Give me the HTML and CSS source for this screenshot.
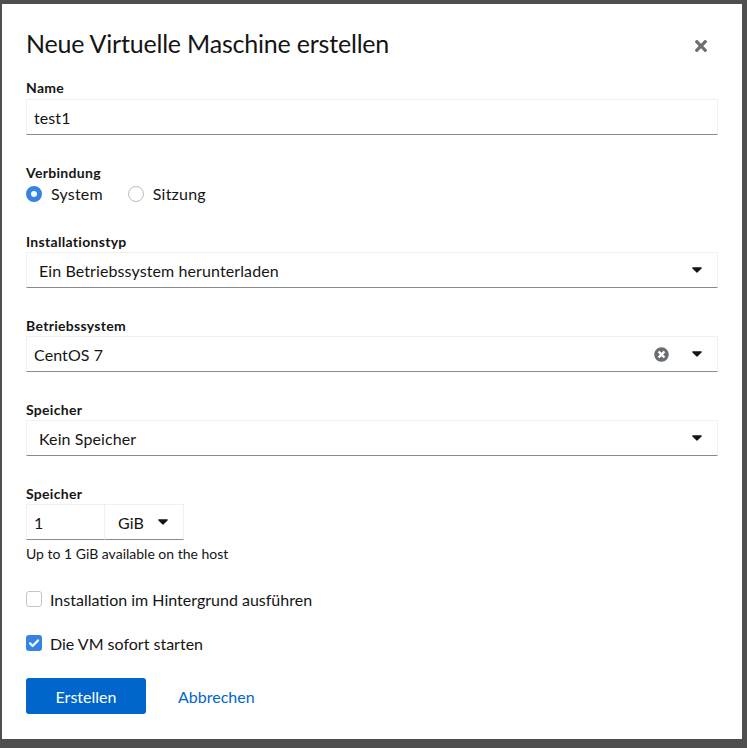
FILE: index.html
```html
<!DOCTYPE html>
<html lang="de">
<head>
<meta charset="utf-8">
<title>Neue Virtuelle Maschine erstellen</title>
<link rel="stylesheet" href="styles.css">
</head>
<body>
<div class="modal">
  <header class="modal-header">
    <h1 class="modal-title">Neue Virtuelle Maschine erstellen</h1>
    <button class="close-btn" aria-label="Schließen">
      <svg viewBox="0 89 352 334" width="12" height="12"><path fill="currentColor" d="M242.72 256l100.07-100.07c12.28-12.28 12.28-32.19 0-44.48l-22.24-22.24c-12.28-12.28-32.19-12.28-44.48 0L176 189.28 75.930 89.21c-12.28-12.28-32.19-12.28-44.48 0L9.21 111.45c-12.28 12.28-12.28 32.19 0 44.48L109.28 256 9.21 356.07c-12.28 12.28-12.28 32.19 0 44.48l22.24 22.24c12.28 12.28 32.2 12.28 44.48 0L176 322.72l100.07 100.07c12.28 12.28 32.2 12.28 44.48 0l22.24-22.24c12.28-12.28 12.28-32.19 0-44.48L242.72 256z"/></svg>
    </button>
  </header>

  <form class="form">
    <div class="group">
      <label class="label">Name</label>
      <div class="input"><span class="input-text">test1</span></div>
    </div>

    <div class="group">
      <label class="label">Verbindung</label>
      <div class="radios">
        <span class="radio-item"><span class="radio checked"></span>System</span>
        <span class="radio-item"><span class="radio"></span>Sitzung</span>
      </div>
    </div>

    <div class="group">
      <label class="label">Installationstyp</label>
      <div class="input select">
        <span class="select-text">Ein Betriebssystem herunterladen</span>
        <svg class="caret" viewBox="4 192 312 168" width="10" height="6"><path fill="currentColor" d="M31.3 192h257.3c17.8 0 26.7 21.5 14.1 34.1L174.1 354.8c-7.8 7.8-20.5 7.8-28.3 0L17.2 226.1C4.6 213.5 13.5 192 31.3 192z"/></svg>
      </div>
    </div>

    <div class="group">
      <label class="label">Betriebssystem</label>
      <div class="input select">
        <span class="input-text">CentOS 7</span>
        <svg class="clear" viewBox="0 0 512 512" width="15" height="15"><path fill="currentColor" d="M256 8C119 8 8 119 8 256s111 248 248 248 248-111 248-248S393 8 256 8zm121.6 313.1c4.7 4.7 4.7 12.3 0 17L338 377.6c-4.7 4.7-12.3 4.7-17 0L256 312l-65.1 65.6c-4.7 4.7-12.3 4.7-17 0L134.4 338c-4.7-4.700-4.7-12.3 0-17l65.6-65-65.6-65.1c-4.7-4.7-4.7-12.3 0-17l39.6-39.6c4.7-4.7 12.3-4.7 17 0l65 65.7 65.1-65.6c4.7-4.7 12.3-4.7 17 0l39.6 39.6c4.7 4.7 4.7 12.3 0 17L312 256l65.6 65.1z"/></svg>
        <svg class="caret" viewBox="4 192 312 168" width="10" height="6"><path fill="currentColor" d="M31.3 192h257.3c17.8 0 26.7 21.5 14.1 34.1L174.1 354.8c-7.8 7.8-20.5 7.8-28.3 0L17.2 226.1C4.6 213.5 13.5 192 31.3 192z"/></svg>
      </div>
    </div>

    <div class="group">
      <label class="label">Speicher</label>
      <div class="input select">
        <span class="select-text">Kein Speicher</span>
        <svg class="caret" viewBox="4 192 312 168" width="10" height="6"><path fill="currentColor" d="M31.3 192h257.3c17.8 0 26.7 21.5 14.1 34.1L174.1 354.8c-7.8 7.8-20.5 7.8-28.3 0L17.2 226.1C4.6 213.5 13.5 192 31.3 192z"/></svg>
      </div>
    </div>

    <div class="group">
      <label class="label">Speicher</label>
      <div class="input-group">
        <div class="input small"><span class="input-text">1</span></div>
        <div class="input small unit">
          <span class="unit-text">GiB</span>
          <svg class="caret" viewBox="4 192 312 168" width="10" height="6"><path fill="currentColor" d="M31.3 192h257.3c17.8 0 26.7 21.5 14.1 34.1L174.1 354.8c-7.8 7.8-20.5 7.8-28.3 0L17.2 226.1C4.6 213.5 13.5 192 31.3 192z"/></svg>
        </div>
      </div>
      <div class="helper">Up to 1 GiB available on the host</div>
    </div>

    <div class="check-row first">
      <span class="checkbox"></span>Installation im Hintergrund ausführen
    </div>
    <div class="check-row second">
      <span class="checkbox checked">
        <svg viewBox="0 0 16 16" width="16" height="16"><path d="M4 8.3l2.6 2.6L12 5.4" fill="none" stroke="#fff" stroke-width="2.2" stroke-linecap="round" stroke-linejoin="round"/></svg>
      </span>Die VM sofort starten
    </div>

    <div class="actions">
      <button type="button" class="btn-primary">Erstellen</button>
      <button type="button" class="btn-link">Abbrechen</button>
    </div>
  </form>
</div>
</body>
</html>
```

FILE: styles.css
```css
html, body {
  margin: 0;
  padding: 0;
  background: #4f4f4f;
}

body {
  font-family: "Lato", "Liberation Sans", sans-serif;
  color: #151515;
  padding: 4px 5px 9px 2px;
}

.modal {
  width: 740px;
  height: 735px;
  box-sizing: border-box;
  background: #fff;
  padding: 24px 24px 24px 24px;
  display: flex;
  flex-direction: column;
}

.modal-header {
  display: flex;
  align-items: flex-start;
  justify-content: space-between;
  height: 36px;
}

.modal-title {
  margin: 0;
  font-size: 25px;
  font-weight: 400;
  line-height: 30px;
  letter-spacing: -0.2px;
}

.close-btn {
  border: 0;
  background: none;
  padding: 0;
  margin-right: 11px;
  color: #6a6e73;
  display: flex;
  align-items: center;
  margin-top: 12px;
}

.form {
  display: flex;
  flex-direction: column;
  margin-top: 14px;
}

.group {
  display: flex;
  flex-direction: column;
  margin-bottom: 28px;
}

.label {
  font-size: 14px;
  font-weight: 700;
  line-height: 20px;
  height: 20px;
  letter-spacing: 0.3px;
}

.group:first-child .label {
  height: 21px;
}

.input {
  height: 36px;
  box-sizing: border-box;
  border: 1px solid #f0f0f0;
  border-bottom-color: #8a8d90;
  display: flex;
  align-items: center;
  font-size: 16px;
  letter-spacing: 0.1px;
}

.input-text {
  padding-left: 7px;
  flex: 1;
}

.select-text {
  padding-left: 12px;
  flex: 1;
}

.caret {
  color: #151515;
  margin-right: 15px;
  flex: none;
}

.clear {
  color: #6a6e73;
  margin-right: 23px;
  flex: none;
}

.radios {
  display: flex;
  align-items: center;
  height: 21px;
  font-size: 16px;
  letter-spacing: 0.2px;
}

.radio-item {
  display: flex;
  align-items: center;
  margin-right: 25px;
}

.radio {
  width: 16px;
  height: 16px;
  box-sizing: border-box;
  border-radius: 50%;
  border: 1.5px solid #bfbcb8;
  background: #fff;
  margin-right: 9px;
}

.radio.checked {
  border: 5px solid #3584e4;
}

.input-group {
  display: flex;
}

.input.small {
  width: 79px;
}

.input.unit {
  border-left: 0;
  padding-left: 12px;
  justify-content: space-between;
}

.unit-text {
  padding-left: 1px;
}

.input.unit .caret {
  margin-right: 15px;
}

.helper {
  font-size: 14px;
  line-height: 18px;
  margin-top: 5px;
  margin-bottom: -4px;
}

.check-row {
  display: flex;
  align-items: center;
  height: 24px;
  font-size: 16px;
}

.check-row.second {
  margin-top: 20px;
}

.checkbox {
  width: 16px;
  height: 16px;
  box-sizing: border-box;
  border: 1.5px solid #c7c4c0;
  border-radius: 3px;
  margin-right: 8px;
  display: flex;
  align-items: center;
  justify-content: center;
}

.checkbox.checked {
  border: 0;
  background: #3584e4;
}

.actions {
  display: flex;
  align-items: center;
  margin-top: 23px;
}

.btn-primary {
  font-family: inherit;
  font-size: 16px;
  height: 36px;
  width: 120px;
  background: #0066cc;
  color: #fff;
  border: 0;
  border-radius: 3px;
  padding: 0;
}

.btn-link {
  font-family: inherit;
  font-size: 16px;
  background: none;
  border: 0;
  color: #0066cc;
  margin-left: 16px;
  padding: 6px 16px;
}
```
